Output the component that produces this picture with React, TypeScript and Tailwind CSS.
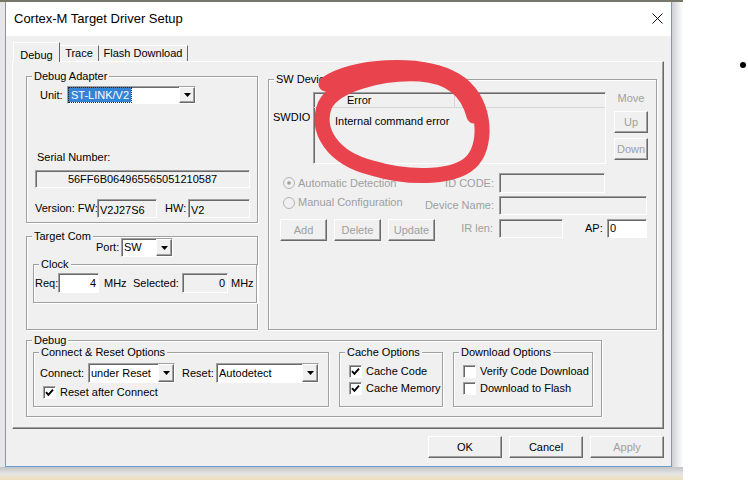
import React from 'react';

// classic win32 bevels
const sunken =
  'border border-t-[#a0a0a0] border-l-[#a0a0a0] border-r-white border-b-white shadow-[inset_1px_1px_0_#696969]';
const raised =
  'border border-t-white border-l-white border-r-[#696969] border-b-[#696969] shadow-[inset_-1px_-1px_0_#a0a0a0]';
const dim = 'text-[#9f9f9f]';

function Group({ label, className, children }: { label: string; className: string; children?: React.ReactNode }) {
  return (
    <div className={`relative shrink-0 border border-[#a0a0a0] shadow-[inset_1px_1px_0_#fff,1px_1px_0_#fff] ${className}`}>
      <span className="absolute left-[5px] -top-[7px] bg-[#f0f0f0] px-[2px] leading-[13px] whitespace-nowrap">{label}</span>
      {children}
    </div>
  );
}

function Arrow() {
  return (
    <svg width="7" height="4" viewBox="0 0 7 4">
      <path d="M0 0h7L3.5 4z" fill="#000" />
    </svg>
  );
}

function Combo({ value, className, selected }: { value: string; className: string; selected?: boolean }) {
  return (
    <div className={`flex shrink-0 bg-white ${sunken} ${className}`}>
      <div className="flex-1 flex items-center pl-[1px] overflow-hidden whitespace-nowrap">
        {selected ? (
          <span className="bg-[#3383d6] text-white px-[2px] leading-[14px] outline-1 outline-dotted outline-[#0a2a5a]">{value}</span>
        ) : (
          <span className="pl-[1px]">{value}</span>
        )}
      </div>
      <div className={`w-[16px] flex items-center justify-center bg-[#f0f0f0] ${raised}`}>
        <Arrow />
      </div>
    </div>
  );
}

function Field({ value, className, white }: { value?: string; className: string; white?: boolean }) {
  return (
    <div className={`flex shrink-0 items-center whitespace-nowrap ${white ? 'bg-white' : 'bg-[#f0f0f0]'} ${sunken} ${className}`}>
      {value}
    </div>
  );
}

function Btn({ label, className }: { label: string; className: string }) {
  return <div className={`flex shrink-0 items-center justify-center bg-[#f0f0f0] ${raised} ${className}`}>{label}</div>;
}

function Check({ on }: { on?: boolean }) {
  return (
    <span className={`w-[13px] h-[13px] shrink-0 bg-white flex items-center justify-center ${sunken}`}>
      {on && (
        <svg width="9" height="9" viewBox="0 0 9 9">
          <path d="M1 4.2 3.4 6.8 8 1.6" fill="none" stroke="#000" strokeWidth="1.9" />
        </svg>
      )}
    </span>
  );
}

function Radio({ on }: { on?: boolean }) {
  return (
    <svg width="12" height="12" viewBox="0 0 12 12" className="shrink-0">
      <circle cx="6" cy="6" r="5.5" fill="#f0f0f0" stroke="#b4b4b4" />
      {on && <circle cx="6" cy="6" r="1.8" fill="#9f9f9f" />}
    </svg>
  );
}

export default function App() {
  return (
    <div className="relative w-[748px] h-[480px] overflow-hidden bg-white text-[11px] text-black font-['Liberation_Sans',Arial,sans-serif]">
      <div className="h-[2px] w-[683px] bg-[#76766a]" />
      <div className="flex h-[465px]">
        <div className="w-[5px] bg-[#e4e6e8]" />
        {/* dialog window */}
        <div className="w-[667px] flex flex-col border-x border-b border-[#6d9bd0]">
          <div className="h-[34px] shrink-0 bg-white flex items-center pl-[8px]">
            <span className="text-[13px]">Cortex-M Target Driver Setup</span>
            <svg width="11" height="11" viewBox="0 0 11 11" className="ml-auto mr-[8px] -mt-[1px]">
              <path d="M0.5 0.5 10.5 10.5M10.5 0.5 0.5 10.5" stroke="#111" strokeWidth="1" />
            </svg>
          </div>
          <div className="flex-1 bg-[#f0f0f0] pt-[4px] pl-[6px]">
            {/* tabs */}
            <div className="flex items-end h-[21px] pl-[1px]">
              <div className="relative top-[1px] z-10 h-[20px] w-[47px] flex items-start justify-center pt-[4px] bg-[#f0f0f0] border-t border-l border-t-white border-l-white border-r border-r-[#696969]">
                Debug
              </div>
              <div className="h-[16px] w-[39px] flex items-center justify-center border-t border-t-white border-r border-r-[#696969]">
                Trace
              </div>
              <div className="h-[16px] w-[89px] flex items-center justify-center border-t border-t-white border-r border-r-[#696969]">
                Flash Download
              </div>
            </div>
            {/* tab page */}
            <div className="w-[652px] h-[368px] border border-t-white border-l-white border-r-[#696969] border-b-[#696969] shadow-[inset_-1px_-1px_0_#a0a0a0] pl-[13px] pt-[14px]">
              <div className="flex items-start">
                <div className="w-[234px] flex flex-col">
                  <Group label="Debug Adapter" className="w-[232px] h-[147px] flex flex-col">
                    <div className="mt-[9px] h-[18px] flex items-center pl-[13px]">
                      <span className="w-[27px]">Unit:</span>
                      <Combo value="ST-LINK/V2" selected className="w-[129px] h-[18px]" />
                    </div>
                    <div className="mt-[47px] pl-[10px] leading-[13px]">Serial Number:</div>
                    <Field value="56FF6B064965565051210587" className="mt-[6px] ml-[8px] w-[215px] h-[18px] justify-center" />
                    <div className="mt-[11px] h-[19px] flex items-center pl-[8px]">
                      <span className="w-[62px] whitespace-nowrap">Version: FW:</span>
                      <Field value="V2J27S6" className="w-[60px] h-[19px] pl-[2px] pt-[3px]" />
                      <span className="ml-[8px] w-[23px]">HW:</span>
                      <Field value="V2" className="w-[62px] h-[19px] pl-[2px] pt-[3px]" />
                    </div>
                  </Group>
                  <Group label="Target Com" className="mt-[13px] w-[232px] h-[94px] flex flex-col">
                    <div className="mt-[1px] h-[19px] flex items-center pl-[69px]">
                      <span className="w-[25px]">Port:</span>
                      <Combo value="SW" className="w-[52px] h-[19px]" />
                    </div>
                    <Group label="Clock" className="mt-[7px] ml-[6px] w-[224px] h-[39px]">
                      <div className="mt-[8px] h-[20px] flex items-center pl-[1px]">
                        <span className="w-[23px]">Req:</span>
                        <Field value="4" white className="w-[41px] h-[20px] justify-end pr-[2px]" />
                        <span className="ml-[5px] w-[24px]">MHz</span>
                        <span className="ml-[5px] w-[49px]">Selected:</span>
                        <Field value="0" className="w-[46px] h-[20px] justify-end pr-[2px]" />
                        <span className="ml-[3px]">MHz</span>
                      </div>
                    </Group>
                  </Group>
                </div>

                <Group label="SW Device" className="ml-[8px] mt-[3px] w-[389px] h-[251px] flex flex-col">
                  <div className="mt-[12px] flex items-start">
                    <span className="w-[44px] pl-[4px] mt-[19px] leading-[13px]">SWDIO</span>
                    <div className={`w-[293px] h-[72px] flex flex-col bg-[#f0f0f0] ${sunken}`}>
                      <div className="h-[15px] flex border-b border-[#d5d5d5]">
                        <div className="w-[141px] pl-[33px] leading-[14px] border-r border-[#d5d5d5]">Error</div>
                      </div>
                      <div className="mt-[7px] pl-[21px] leading-[13px]">Internal command error</div>
                    </div>
                    <div className="ml-[8px] w-[34px] flex flex-col">
                      <span className={`leading-[13px] text-center ${dim}`}>Move</span>
                      <Btn label="Up" className={`mt-[6px] h-[22px] ${dim}`} />
                      <Btn label="Down" className={`mt-[5px] h-[22px] ${dim}`} />
                    </div>
                  </div>
                  <div className="mt-[9px] h-[20px] flex items-center">
                    <div className={`w-[226px] flex items-center pl-[14px] pr-[1px] ${dim}`}>
                      <Radio on />
                      <span className="ml-[3px]">Automatic Detection</span>
                      <span className="ml-auto">ID CODE:</span>
                    </div>
                    <Field className="ml-[4px] w-[106px] h-[20px]" />
                  </div>
                  <div className="mt-[3px] h-[19px] flex items-start">
                    <div className={`w-[226px] flex items-start pl-[14px] pr-[1px] ${dim}`}>
                      <span className="h-[13px] flex items-center">
                        <Radio />
                        <span className="ml-[3px]">Manual Configuration</span>
                      </span>
                      <span className="ml-auto mt-[3px] leading-[13px]">Device Name:</span>
                    </div>
                    <Field className="ml-[4px] w-[148px] h-[19px]" />
                  </div>
                  <div className="mt-[4px] flex items-start">
                    <div className={`w-[226px] flex items-start pl-[11px] pr-[2px] ${dim}`}>
                      <Btn label="Add" className="w-[47px] h-[22px]" />
                      <Btn label="Delete" className="ml-[7px] w-[47px] h-[22px]" />
                      <Btn label="Update" className="ml-[7px] w-[47px] h-[22px]" />
                      <span className="ml-auto mt-[3px] leading-[13px]">IR len:</span>
                    </div>
                    <Field className="ml-[4px] w-[64px] h-[19px]" />
                    <span className="w-[22px] ml-[22px] leading-[19px]">AP:</span>
                    <Field value="0" white className="w-[40px] h-[19px] pl-[2px]" />
                  </div>
                </Group>
              </div>

              <Group label="Debug" className="mt-[10px] w-[576px] h-[77px] flex items-start pt-[11px] pl-[6px]">
                <Group label="Connect & Reset Options" className="w-[296px] h-[55px] flex flex-col">
                  <div className="mt-[10px] h-[20px] flex items-center pl-[6px]">
                    <span className="w-[48px]">Connect:</span>
                    <Combo value="under Reset" className="w-[87px] h-[20px]" />
                    <span className="ml-[7px] w-[34px]">Reset:</span>
                    <Combo value="Autodetect" className="w-[103px] h-[20px]" />
                  </div>
                  <div className="mt-[3px] h-[13px] flex items-center pl-[9px]">
                    <Check on />
                    <span className="ml-[4px]">Reset after Connect</span>
                  </div>
                </Group>
                <Group label="Cache Options" className="ml-[10px] w-[104px] h-[55px] pt-[10px] pl-[9px]">
                  <div className="h-[17px] flex items-center">
                    <Check on />
                    <span className="ml-[4px]">Cache Code</span>
                  </div>
                  <div className="h-[17px] flex items-center">
                    <Check on />
                    <span className="ml-[4px]">Cache Memory</span>
                  </div>
                </Group>
                <Group label="Download Options" className="ml-[10px] w-[140px] h-[55px] pt-[10px] pl-[9px]">
                  <div className="h-[17px] flex items-center">
                    <Check />
                    <span className="ml-[4px]">Verify Code Download</span>
                  </div>
                  <div className="h-[17px] flex items-center">
                    <Check />
                    <span className="ml-[4px]">Download to Flash</span>
                  </div>
                </Group>
              </Group>
            </div>
            {/* dialog buttons */}
            <div className="mt-[7px] w-[652px] flex justify-end gap-[7px]">
              <Btn label="OK" className="w-[74px] h-[22px] border-r-[#3c3c3c] border-b-[#3c3c3c]" />
              <Btn label="Cancel" className="w-[74px] h-[22px]" />
              <Btn label="Apply" className={`w-[74px] h-[22px] ${dim}`} />
            </div>
          </div>
        </div>
        <div className="w-[11px] bg-gradient-to-r from-[#cdd1d6] to-white" />
        <div className="flex-1 pl-[57px] pt-[60px]">
          <span className="block w-[6px] h-[6px] rounded-full bg-black" />
        </div>
      </div>
      <div className="w-[683px] h-[13px] bg-gradient-to-b from-[#c3c3c3] via-[#e4e4e4] to-[#eee0b9]" />

      {/* red marker scribble over the list */}
      <svg className="absolute left-0 top-0 pointer-events-none" width="748" height="480" viewBox="0 0 748 480">
        <path
          d="M326 84 C350 66 420 60 455 80 C486 98 488 142 473 160 C458 178 412 180 372 168 C332 158 315 130 325 105 C335 85 380 72 420 74 C450 76 468 92 474 116"
          fill="none"
          stroke="#e9444e"
          strokeWidth="15"
          strokeLinecap="round"
          strokeLinejoin="round"
        />
      </svg>
    </div>
  );
}
